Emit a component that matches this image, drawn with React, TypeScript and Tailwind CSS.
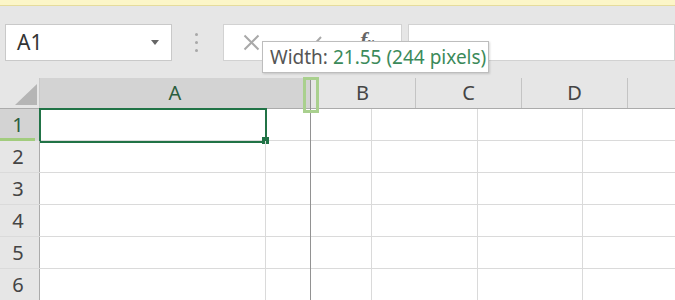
import type { ReactNode } from 'react';

const headCols = [
  { label: 'B', w: 'w-[106px]' },
  { label: 'C', w: 'w-[106px]' },
  { label: 'D', w: 'w-[106px]' }
];

const rows = [1, 2, 3, 4, 5, 6];

function Cell({ className, children }: { className: string; children?: ReactNode }) {
  return <div className={`h-full shrink-0 border-r border-[#dadada] ${className}`}>{children}</div>;
}

export default function App() {
  return (
    <div className="relative h-[300px] w-[675px] overflow-hidden bg-white font-['Noto_Sans',sans-serif]">
      {/* message bar strip */}
      <div className="h-[6px] border-b border-[#e6dc9c] bg-[#fcf6c8]" />

      {/* name box + formula bar */}
      <div className="flex h-[72px] items-start bg-[#e6e6e6] pt-[18px]">
        <div className="ml-[5px] flex h-[37px] w-[167px] items-center justify-between border border-[#c9c9c9] bg-white pl-[11px] pr-[12px]">
          <span className="text-[21px] leading-none text-[#333]">A1</span>
          <svg width="8" height="5" viewBox="0 0 8 5">
            <path d="M0 0h8L4 5z" fill="#666" />
          </svg>
        </div>
        <div className="ml-[22px] flex h-[37px] w-[4px] flex-col items-center justify-center gap-[5px]">
          <span className="h-[3px] w-[3px] rounded-full bg-[#a8a8a8]" />
          <span className="h-[3px] w-[3px] rounded-full bg-[#a8a8a8]" />
          <span className="h-[3px] w-[3px] rounded-full bg-[#a8a8a8]" />
        </div>
        <div className="ml-[25px] flex h-[37px] w-[179px] items-center border border-[#d2d2d2] bg-white pl-[19px]">
          <svg width="17" height="17" viewBox="0 0 17 17">
            <path d="M1.5 1.5l14 14M15.5 1.5l-14 14" stroke="#a9a9a9" strokeWidth="2" />
          </svg>
          <svg className="ml-[44px]" width="18" height="16" viewBox="0 0 18 16">
            <path d="M1 9l5 5L17 2" stroke="#a9a9a9" strokeWidth="2" fill="none" />
          </svg>
          <span className="relative -top-[3px] ml-[38px] font-['Liberation_Serif',serif] text-[22px] font-bold italic leading-none text-[#666]">
            f<span className="text-[14px]">x</span>
          </span>
        </div>
        <div className="ml-[6px] h-[37px] flex-1 border border-[#d2d2d2] bg-white" />
      </div>

      {/* column headers */}
      <div className="flex h-[31px] border-b border-[#ababab] bg-[#e6e6e6] text-[20px] text-[#444]">
        <div className="flex h-full w-[40px] shrink-0 items-end justify-end border-r border-[#c9c9c9] pb-[3px] pr-[2px]">
          <svg width="22" height="21" viewBox="0 0 22 21">
            <path d="M22 0v21H0z" fill="#b5b5b5" />
          </svg>
        </div>
        <div className="flex h-full w-[270px] shrink-0 items-center justify-center bg-[#d3d3d3] text-[#2b5e3d]">A</div>
        {headCols.map((c) => (
          <div key={c.label} className={`flex h-full shrink-0 items-center justify-center border-r border-[#c4c4c4] ${c.w}`}>
            {c.label}
          </div>
        ))}
        <div className="flex-1" />
      </div>

      {/* grid */}
      {rows.map((r) => (
        <div key={r} className="flex h-[32px] border-b border-[#dadada]">
          <div
            className={`relative flex h-full w-[40px] shrink-0 items-center justify-center border-r border-[#ababab] pr-[3px] text-[20px] ${
              r === 1 ? 'bg-[#d3d3d3] text-[#2b5e3d]' : 'bg-[#e6e6e6] text-[#444]'
            }`}
          >
            {r}
            {r === 1 && <div className="absolute -bottom-[2px] left-0 h-[4px] w-[35px] bg-[#a2cc7e]" />}
          </div>
          <Cell className="relative w-[226px]">
            {r === 1 && (
              <>
                <div className="absolute -left-[1px] -top-[1px] h-[35px] w-[228px] border-2 border-[#217346]" />
                <div className="absolute left-[222px] top-[28px] h-[7px] w-[7px] bg-[#217346]" />
              </>
            )}
          </Cell>
          <Cell className="w-[106px]" />
          <Cell className="w-[106px]" />
          <Cell className="w-[105px]" />
          <div className="flex-1" />
        </div>
      ))}

      {/* column resize drag marker */}
      <div className="absolute bottom-0 left-[310px] top-[77px] w-px bg-[#929292]" />
      <div className="absolute left-[303px] top-[77px] h-[36px] w-[16px] border-[3px] border-[#a9d08e]" />

      {/* width tooltip */}
      <div className="absolute left-[262px] top-[41px] flex h-[32px] w-[227px] items-center border border-[#bdbdbd] bg-white pl-[7px] text-[19px] text-[#555] shadow-[1px_1px_2px_rgba(0,0,0,0.15)]">
        Width:&nbsp;<span className="text-[#3b8a5a]">21.55 (244 pixels)</span>
      </div>
    </div>
  );
}
